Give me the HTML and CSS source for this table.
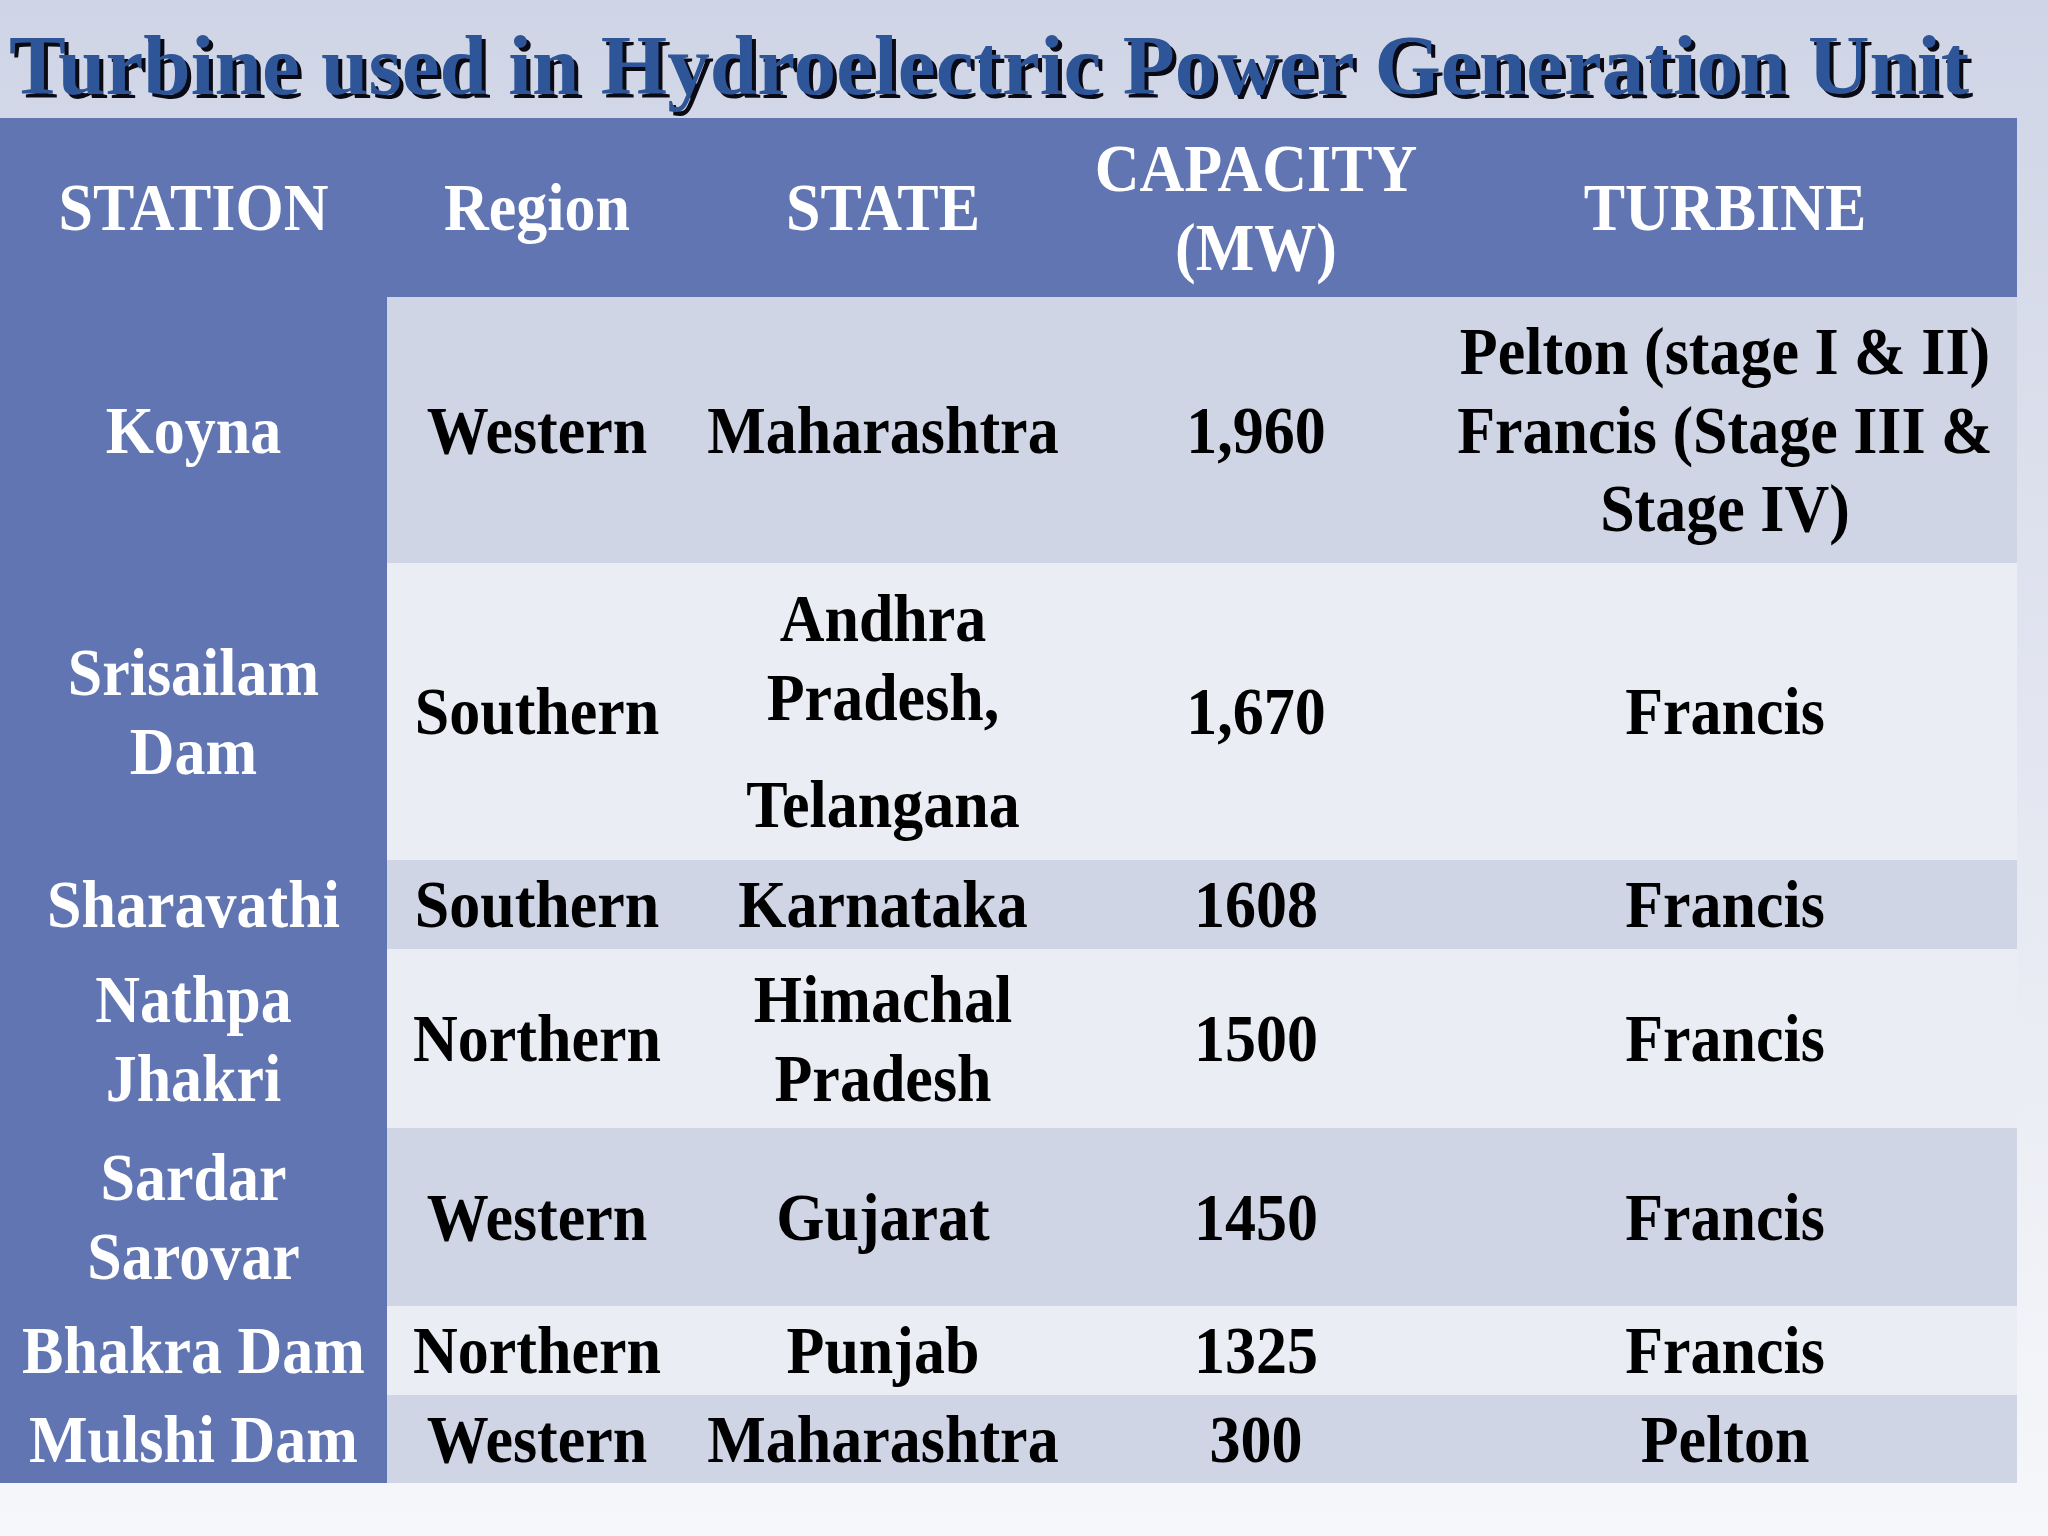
FILE: index.html
```html
<!DOCTYPE html>
<html lang="en">
<head>
<meta charset="utf-8">
<title>Turbine used in Hydroelectric Power Generation Unit</title>
<link rel="stylesheet" href="styles.css">
</head>
<body>
<h1 class="title">Turbine used in Hydroelectric Power Generation Unit</h1>
<div class="grid">
  <div class="c hd"><span>STATION</span></div>
  <div class="c hd"><span>Region</span></div>
  <div class="c hd"><span>STATE</span></div>
  <div class="c hd"><span>CAPACITY<br>(MW)</span></div>
  <div class="c hd"><span>TURBINE</span></div>

  <div class="c st"><span>Koyna</span></div>
  <div class="c dk"><span>Western</span></div>
  <div class="c dk"><span>Maharashtra</span></div>
  <div class="c dk"><span>1,960</span></div>
  <div class="c dk"><span>Pelton (stage I &amp; II)<br>Francis (Stage III &amp;<br>Stage IV)</span></div>

  <div class="c st"><span>Srisailam<br>Dam</span></div>
  <div class="c lt"><span>Southern</span></div>
  <div class="c lt"><span>Andhra<br>Pradesh,<i class="gap"></i>Telangana</span></div>
  <div class="c lt"><span>1,670</span></div>
  <div class="c lt"><span>Francis</span></div>

  <div class="c st"><span>Sharavathi</span></div>
  <div class="c dk"><span>Southern</span></div>
  <div class="c dk"><span>Karnataka</span></div>
  <div class="c dk"><span>1608</span></div>
  <div class="c dk"><span>Francis</span></div>

  <div class="c st"><span>Nathpa<br>Jhakri</span></div>
  <div class="c lt"><span>Northern</span></div>
  <div class="c lt"><span>Himachal<br>Pradesh</span></div>
  <div class="c lt"><span>1500</span></div>
  <div class="c lt"><span>Francis</span></div>

  <div class="c st"><span>Sardar<br>Sarovar</span></div>
  <div class="c dk"><span>Western</span></div>
  <div class="c dk"><span>Gujarat</span></div>
  <div class="c dk"><span>1450</span></div>
  <div class="c dk"><span>Francis</span></div>

  <div class="c st"><span>Bhakra Dam</span></div>
  <div class="c lt"><span>Northern</span></div>
  <div class="c lt"><span>Punjab</span></div>
  <div class="c lt"><span>1325</span></div>
  <div class="c lt"><span>Francis</span></div>

  <div class="c st"><span>Mulshi Dam</span></div>
  <div class="c dk"><span>Western</span></div>
  <div class="c dk"><span>Maharashtra</span></div>
  <div class="c dk"><span>300</span></div>
  <div class="c dk"><span>Pelton</span></div>
</div>
</body>
</html>
```
FILE: styles.css
```css
html, body {
  margin: 0;
  padding: 0;
}

body {
  width: 2048px;
  height: 1536px;
  overflow: hidden;
  background: linear-gradient(to bottom, #cfd5e6 0%, #e2e5f0 45%, #f6f7fa 100%);
  font-family: "Liberation Serif", "Times New Roman", serif;
}

.title {
  margin: 0;
  height: 118px;
  box-sizing: border-box;
  padding: 15px 0 0 9px;
  font-size: 85.3px;
  line-height: 100px;
  font-weight: bold;
  color: #2e5597;
  text-shadow: 4px 4px 0 #0a0a14;
  white-space: nowrap;
}

.grid {
  display: grid;
  width: 2017px;
  grid-template-columns: 387px 300px 392px 354px 584px;
  grid-template-rows: 179px 266px 297px 89px 179px 178px 89px 88px;
}

.c {
  display: flex;
  align-items: center;
  justify-content: center;
  text-align: center;
  font-weight: bold;
  font-size: 62px;
  white-space: nowrap;
}

.c > span {
  display: block;
  line-height: 73px;
  transform: scaleY(1.08);
}

.gap {
  display: block;
  height: 26px;
}

.hd,
.st {
  background: #6175b3;
  color: #ffffff;
}

.dk {
  background: #d0d5e6;
  color: #000000;
}

.lt {
  background: #ebedf5;
  color: #000000;
}
```
